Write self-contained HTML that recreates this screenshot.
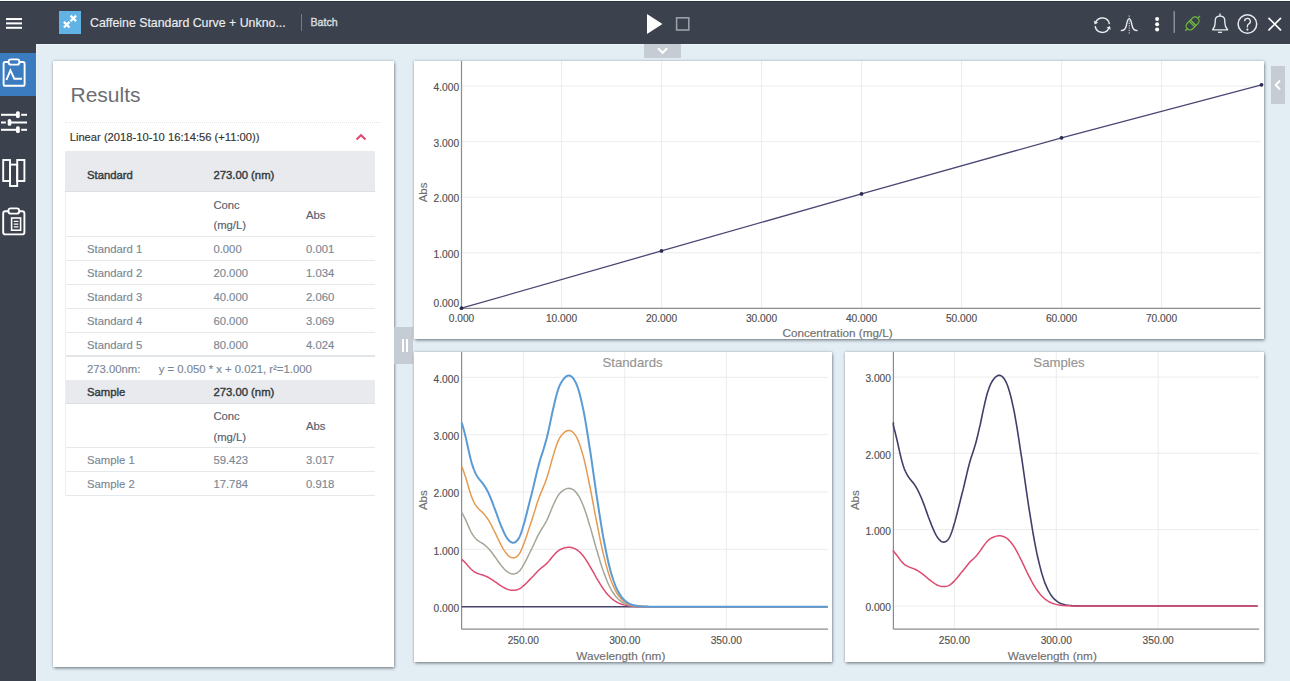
<!DOCTYPE html>
<html><head><meta charset="utf-8">
<style>
*{margin:0;padding:0;box-sizing:border-box}
html,body{width:1290px;height:681px;overflow:hidden;background:#e2edf4;font-family:"Liberation Sans",sans-serif}
.abs{position:absolute}
.card{position:absolute;background:#fff;box-shadow:0 0 2.5px rgba(40,45,50,.35),0.5px 1.5px 3px rgba(40,45,50,.45)}
.t{position:absolute;white-space:nowrap;line-height:1;-webkit-text-stroke:0.15px currentColor}
svg{position:absolute;overflow:visible}
</style></head><body>

<div class="abs" style="left:0;top:0;width:1290px;height:44px;background:#3b414d"></div>
<div class="abs" style="left:0;top:0;width:1290px;height:1px;background:#fff"></div>
<div class="abs" style="left:0;top:1px;width:1290px;height:1px;background:#2b3442"></div>
<div class="abs" style="left:0;top:44px;width:36px;height:637px;background:#3b414d"></div>
<div class="abs" style="left:36px;top:44px;width:1254px;height:637px;background:#e2edf4;border-top:1px solid #ecf2f7;border-left:1px solid #ecf2f7"></div>
<div class="abs" style="left:0;top:53px;width:36px;height:43px;background:#3b7cc0"></div>
<svg style="left:0;top:0" width="40" height="44"><g fill="#fff"><rect x="6" y="18.05" width="16" height="2"/><rect x="6" y="22.4" width="16" height="2"/><rect x="6" y="26.8" width="16" height="2"/></g></svg>
<div class="abs" style="left:59px;top:11px;width:22px;height:23px;background:#60b3e4"></div>
<svg style="left:59px;top:11px" width="22" height="23"><g stroke="#fff" stroke-width="2.2" stroke-linecap="butt"><path d="M4.9 10.9l5.6 5.6M10.5 10.9l-5.6 5.6M11.5 4.6l5.6 5.6M17.1 4.6l-5.6 5.6"/></g></svg>

<div class="abs" style="left:301px;top:14px;width:1px;height:17px;background:#737a83"></div>

<svg style="left:640px;top:8px" width="60" height="32"><path d="M7 6L22.5 16L7 26Z" fill="#fff"/><rect x="36.6" y="9.8" width="12.2" height="12.2" fill="none" stroke="#9aa0a8" stroke-width="1.6"/></svg>
<div class="abs" style="left:644px;top:44px;width:37px;height:14px;background:#c6ccd3"></div>
<svg style="left:644px;top:44px" width="37" height="14"><path d="M14 4.3l4.6 4.5 4.6-4.5" fill="none" stroke="#fff" stroke-width="1.9"/></svg>
<svg style="left:1085px;top:5px" width="205" height="36">
<g fill="none" stroke="#e8eaec" stroke-width="1.5">
<path d="M10.77 17.16A7.2 7.2 0 0 1 24.43 19.20"/>
<path d="M23.83 23.24A7.2 7.2 0 0 1 10.17 21.20"/>
</g>
<path d="M9.68 19.51L8.81 15.69L13.16 17.72Z" fill="#e8eaec"/>
<path d="M24.92 20.89L25.79 24.71L21.44 22.68Z" fill="#e8eaec"/>
<path d="M35.8 25.6C39.6 25.6 40.6 24 41.6 19.5C42.4 15.2 42.8 13.6 44.2 13.6C45.6 13.6 46 15.2 46.8 19.5C47.8 24 48.8 25.6 52.6 25.6" fill="none" stroke="#e8eaec" stroke-width="1.4"/>
<path d="M44.2 10.5v18.5" stroke="#e8eaec" stroke-width="1" stroke-dasharray="1.2 1.2"/>
<circle cx="72.1" cy="14" r="2" fill="#fff"/><circle cx="72.1" cy="19.2" r="2" fill="#fff"/><circle cx="72.1" cy="24.4" r="2" fill="#fff"/>
<rect x="88.5" y="6.2" width="1.5" height="21.7" fill="#8a9098"/>
<g transform="translate(107.6 18.4) rotate(-45)" fill="none" stroke="#6fb840" stroke-width="1.25">
<rect x="-7.5" y="-3.9" width="15" height="7.8" rx="3.9"/><path d="M-0.9 -3.9v7.8M0.9 -3.9v7.8M-10.5 0h3M7.5 0h3"/>
</g>
<path d="M127.6 24.8H142.6C140.6 22.5 139.8 20.5 139.8 17.5V15.8C139.8 12.9 137.8 11.1 135 11.1C132.2 11.1 130.2 12.9 130.2 15.8V17.5C130.2 20.5 129.4 22.5 127.6 24.8Z" fill="none" stroke="#e8eaec" stroke-width="1.35" stroke-linejoin="round"/>
<path d="M135 8.6v2.4" stroke="#e8eaec" stroke-width="1.4"/><path d="M133 27.3h4" stroke="#e8eaec" stroke-width="1.3"/>
<circle cx="162.4" cy="19" r="9.3" fill="none" stroke="#e8eaec" stroke-width="1.5"/>
<path d="M159.6 16.3a2.9 2.9 0 1 1 4.2 2.6c-1 .5-1.4 1.1-1.4 2.4v1.2" fill="none" stroke="#e8eaec" stroke-width="1.3"/>
<circle cx="162.4" cy="24.6" r="1.1" fill="#e8eaec"/>
<path d="M184 13.4l11.5 11.5M195.5 13.4l-11.5 11.5" stroke="#fff" stroke-width="1.7" stroke-linecap="round"/>
</svg>
<svg style="left:0;top:44px" width="36" height="200">
<g fill="none" stroke="#fff" stroke-width="1.9">
<rect x="3.6" y="18" width="21" height="23.8" rx="1.6"/>
<rect x="8.6" y="15.4" width="10.8" height="5.2" rx="2.4" fill="#3b7cc0"/>
<path d="M6.4 36L10.4 26.4L14.3 34.7H21.9"/>
</g>
<g fill="#fff">
<rect x="1" y="69.8" width="15" height="2"/><rect x="21.2" y="69.8" width="5.8" height="2"/><rect x="16" y="67.3" width="3.8" height="6.8" rx="1.6"/>
<rect x="1" y="77.5" width="4.9" height="2"/><rect x="10" y="77.5" width="17" height="2"/><rect x="7.7" y="75" width="3.6" height="6.8" rx="1.6"/>
<rect x="1" y="84.8" width="15" height="2"/><rect x="21.2" y="84.8" width="5.8" height="2"/><rect x="16" y="82.3" width="3.8" height="6.8" rx="1.6"/>
</g>
<g fill="none" stroke="#fff" stroke-width="1.9">
<rect x="3.2" y="116" width="6.8" height="21"/>
<rect x="10" y="120.6" width="7.2" height="21.4"/>
<rect x="17.2" y="116" width="7.2" height="21"/>
<rect x="3.2" y="167.2" width="21.2" height="23.2" rx="2.2"/>
<rect x="8.4" y="164.4" width="10.8" height="5.2" rx="2.4" fill="#3a414c"/>
<rect x="11.6" y="174" width="9" height="12.2" stroke-width="1.6"/>
<path d="M13.8 177.4h4.6M13.8 180.1h4.6M13.8 182.8h4.6" stroke-width="1.3"/>
</g>
</svg>
<div class="card" style="left:53px;top:61px;width:341px;height:606px"></div>

<div class="abs" style="left:65px;top:122px;width:316px;height:0;border-top:1px dotted #e3e6ea"></div>

<svg style="left:355px;top:132px" width="12" height="10"><path d="M1.5 7.5l4.5-4.3 4.5 4.3" fill="none" stroke="#e0466e" stroke-width="2"/></svg>
<div class="abs" style="left:65px;top:151px;width:310px;height:41px;background:#e8eaed"></div>
<div class="abs" style="left:65px;top:191px;width:310px;height:1px;background:#dcdfe3"></div>





<div class="abs" style="left:65px;top:236px;width:310px;height:1px;background:#e6e9ec"></div>















<div class="abs" style="left:65px;top:260px;width:310px;height:1px;background:#e6e9ec"></div>
<div class="abs" style="left:65px;top:284px;width:310px;height:1px;background:#e6e9ec"></div>
<div class="abs" style="left:65px;top:308px;width:310px;height:1px;background:#e6e9ec"></div>
<div class="abs" style="left:65px;top:332px;width:310px;height:1px;background:#e6e9ec"></div>
<div class="abs" style="left:65px;top:355px;width:310px;height:2px;background:#e3e6e9"></div>


<div class="abs" style="left:65px;top:380px;width:310px;height:24px;background:#e8eaed"></div>
<div class="abs" style="left:65px;top:403px;width:310px;height:1px;background:#dcdfe3"></div>





<div class="abs" style="left:65px;top:447px;width:310px;height:1px;background:#e6e9ec"></div>






<div class="abs" style="left:65px;top:471px;width:310px;height:1px;background:#e6e9ec"></div>
<div class="abs" style="left:65px;top:495px;width:310px;height:1px;background:#e6e9ec"></div>
<div class="abs" style="left:65px;top:192px;width:1px;height:304px;background:#eceef0"></div>
<div class="abs" style="left:394px;top:327px;width:19px;height:37px;background:#c6ccd3"></div>
<div class="abs" style="left:402px;top:339px;width:2.2px;height:13px;background:#fff"></div>
<div class="abs" style="left:405.6px;top:339px;width:2.2px;height:13px;background:#fff"></div>
<div class="abs" style="left:1271px;top:66px;width:14px;height:38px;background:#c6ccd3"></div>
<svg style="left:1271px;top:66px" width="14" height="38"><path d="M9 14.5l-4.3 4.5 4.3 4.5" fill="none" stroke="#fff" stroke-width="1.9"/></svg>
<div class="card" style="left:414px;top:61px;width:850px;height:278px"></div>
<svg style="left:0;top:0" width="1290" height="681"><path d="M561.5 61V308" stroke="#ececec" stroke-width="1"/><path d="M661.5 61V308" stroke="#ececec" stroke-width="1"/><path d="M761.5 61V308" stroke="#ececec" stroke-width="1"/><path d="M861.5 61V308" stroke="#ececec" stroke-width="1"/><path d="M961.5 61V308" stroke="#ececec" stroke-width="1"/><path d="M1061.5 61V308" stroke="#ececec" stroke-width="1"/><path d="M1161.5 61V308" stroke="#ececec" stroke-width="1"/><path d="M462 252.8H1261" stroke="#ececec" stroke-width="1"/><path d="M462 197.2H1261" stroke="#ececec" stroke-width="1"/><path d="M462 141.7H1261" stroke="#ececec" stroke-width="1"/><path d="M462 86.1H1261" stroke="#ececec" stroke-width="1"/><path d="M461.5 61V308.3M461.5 308.3H1260.5" stroke="#8c8c8c" stroke-width="1.2" fill="none"/><path d="M461.5 308.2 L661.5 250.9 L861.5 193.9 L1061.5 137.8 L1261.5 84.8" stroke="#4a4874" stroke-width="1.3" fill="none"/><circle cx="461.5" cy="308.2" r="1.9" fill="#2a2950"/><circle cx="661.5" cy="250.9" r="1.9" fill="#2a2950"/><circle cx="861.5" cy="193.9" r="1.9" fill="#2a2950"/><circle cx="1061.5" cy="137.8" r="1.9" fill="#2a2950"/><circle cx="1261.5" cy="84.8" r="1.9" fill="#2a2950"/></svg>














<div class="card" style="left:414px;top:352px;width:418px;height:310px"></div>
<svg style="left:0;top:0" width="1290" height="681"><path d="M523.3 352V629" stroke="#ececec" stroke-width="1"/><path d="M624.8 352V629" stroke="#ececec" stroke-width="1"/><path d="M726.3 352V629" stroke="#ececec" stroke-width="1"/><path d="M461.6 549.4H828" stroke="#ececec" stroke-width="1"/><path d="M461.6 492.0H828" stroke="#ececec" stroke-width="1"/><path d="M461.6 434.7H828" stroke="#ececec" stroke-width="1"/><path d="M461.6 377.3H828" stroke="#ececec" stroke-width="1"/><path d="M461.6 606.7H828" stroke="#ececec" stroke-width="1"/><path d="M461.6 352V629.2M461.6 629.2H828" stroke="#8c8c8c" stroke-width="1.2" fill="none"/><path d="M461.6 606.70 L462.6 606.70 L463.6 606.70 L464.6 606.70 L465.7 606.70 L466.7 606.70 L467.7 606.70 L468.7 606.70 L469.7 606.70 L470.7 606.70 L471.7 606.70 L472.8 606.70 L473.8 606.70 L474.8 606.70 L475.8 606.70 L476.8 606.70 L477.8 606.70 L478.8 606.70 L479.8 606.70 L480.9 606.70 L481.9 606.70 L482.9 606.70 L483.9 606.70 L484.9 606.70 L485.9 606.70 L486.9 606.70 L488.0 606.70 L489.0 606.70 L490.0 606.70 L491.0 606.70 L492.0 606.70 L493.0 606.70 L494.0 606.70 L495.1 606.70 L496.1 606.70 L497.1 606.70 L498.1 606.70 L499.1 606.70 L500.1 606.70 L501.1 606.70 L502.2 606.70 L503.2 606.70 L504.2 606.70 L505.2 606.70 L506.2 606.70 L507.2 606.70 L508.2 606.70 L509.3 606.70 L510.3 606.70 L511.3 606.70 L512.3 606.70 L513.3 606.70 L514.3 606.70 L515.3 606.70 L516.3 606.70 L517.4 606.70 L518.4 606.70 L519.4 606.70 L520.4 606.70 L521.4 606.70 L522.4 606.70 L523.4 606.70 L524.5 606.70 L525.5 606.70 L526.5 606.70 L527.5 606.70 L528.5 606.70 L529.5 606.70 L530.5 606.70 L531.6 606.70 L532.6 606.70 L533.6 606.70 L534.6 606.70 L535.6 606.70 L536.6 606.70 L537.6 606.70 L538.7 606.70 L539.7 606.70 L540.7 606.70 L541.7 606.70 L542.7 606.70 L543.7 606.70 L544.7 606.70 L545.7 606.70 L546.8 606.70 L547.8 606.70 L548.8 606.70 L549.8 606.70 L550.8 606.70 L551.8 606.70 L552.8 606.70 L553.9 606.70 L554.9 606.70 L555.9 606.70 L556.9 606.70 L557.9 606.70 L558.9 606.70 L559.9 606.70 L561.0 606.70 L562.0 606.70 L563.0 606.70 L564.0 606.70 L565.0 606.70 L566.0 606.70 L567.0 606.70 L568.1 606.70 L569.1 606.70 L570.1 606.70 L571.1 606.70 L572.1 606.70 L573.1 606.70 L574.1 606.70 L575.1 606.70 L576.2 606.70 L577.2 606.70 L578.2 606.70 L579.2 606.70 L580.2 606.70 L581.2 606.70 L582.2 606.70 L583.3 606.70 L584.3 606.70 L585.3 606.70 L586.3 606.70 L587.3 606.70 L588.3 606.70 L589.3 606.70 L590.4 606.70 L591.4 606.70 L592.4 606.70 L593.4 606.70 L594.4 606.70 L595.4 606.70 L596.4 606.70 L597.5 606.70 L598.5 606.70 L599.5 606.70 L600.5 606.70 L601.5 606.70 L602.5 606.70 L603.5 606.70 L604.6 606.70 L605.6 606.70 L606.6 606.70 L607.6 606.70 L608.6 606.70 L609.6 606.70 L610.6 606.70 L611.6 606.70 L612.7 606.70 L613.7 606.70 L614.7 606.70 L615.7 606.70 L616.7 606.70 L617.7 606.70 L618.7 606.70 L619.8 606.70 L620.8 606.70 L621.8 606.70 L622.8 606.70 L623.8 606.70 L624.8 606.70 L625.8 606.70 L626.9 606.70 L627.9 606.70 L628.9 606.70 L629.9 606.70 L630.9 606.70 L631.9 606.70 L632.9 606.70 L634.0 606.70 L635.0 606.70 L636.0 606.70 L637.0 606.70 L638.0 606.70 L639.0 606.70 L640.0 606.70 L641.0 606.70 L642.1 606.70 L643.1 606.70 L644.1 606.70 L645.1 606.70 L646.1 606.70 L647.1 606.70 L648.1 606.70 L649.2 606.70 L650.2 606.70 L651.2 606.70 L652.2 606.70 L653.2 606.70 L654.2 606.70 L655.2 606.70 L656.3 606.70 L657.3 606.70 L658.3 606.70 L659.3 606.70 L660.3 606.70 L661.3 606.70 L662.3 606.70 L663.4 606.70 L664.4 606.70 L665.4 606.70 L666.4 606.70 L667.4 606.70 L668.4 606.70 L669.4 606.70 L670.5 606.70 L671.5 606.70 L672.5 606.70 L673.5 606.70 L674.5 606.70 L675.5 606.70 L676.5 606.70 L677.5 606.70 L678.6 606.70 L679.6 606.70 L680.6 606.70 L681.6 606.70 L682.6 606.70 L683.6 606.70 L684.6 606.70 L685.7 606.70 L686.7 606.70 L687.7 606.70 L688.7 606.70 L689.7 606.70 L690.7 606.70 L691.7 606.70 L692.8 606.70 L693.8 606.70 L694.8 606.70 L695.8 606.70 L696.8 606.70 L697.8 606.70 L698.8 606.70 L699.9 606.70 L700.9 606.70 L701.9 606.70 L702.9 606.70 L703.9 606.70 L704.9 606.70 L705.9 606.70 L706.9 606.70 L708.0 606.70 L709.0 606.70 L710.0 606.70 L711.0 606.70 L712.0 606.70 L713.0 606.70 L714.0 606.70 L715.1 606.70 L716.1 606.70 L717.1 606.70 L718.1 606.70 L719.1 606.70 L720.1 606.70 L721.1 606.70 L722.2 606.70 L723.2 606.70 L724.2 606.70 L725.2 606.70 L726.2 606.70 L727.2 606.70 L728.2 606.70 L729.3 606.70 L730.3 606.70 L731.3 606.70 L732.3 606.70 L733.3 606.70 L734.3 606.70 L735.3 606.70 L736.3 606.70 L737.4 606.70 L738.4 606.70 L739.4 606.70 L740.4 606.70 L741.4 606.70 L742.4 606.70 L743.4 606.70 L744.5 606.70 L745.5 606.70 L746.5 606.70 L747.5 606.70 L748.5 606.70 L749.5 606.70 L750.5 606.70 L751.6 606.70 L752.6 606.70 L753.6 606.70 L754.6 606.70 L755.6 606.70 L756.6 606.70 L757.6 606.70 L758.7 606.70 L759.7 606.70 L760.7 606.70 L761.7 606.70 L762.7 606.70 L763.7 606.70 L764.7 606.70 L765.8 606.70 L766.8 606.70 L767.8 606.70 L768.8 606.70 L769.8 606.70 L770.8 606.70 L771.8 606.70 L772.8 606.70 L773.9 606.70 L774.9 606.70 L775.9 606.70 L776.9 606.70 L777.9 606.70 L778.9 606.70 L779.9 606.70 L781.0 606.70 L782.0 606.70 L783.0 606.70 L784.0 606.70 L785.0 606.70 L786.0 606.70 L787.0 606.70 L788.1 606.70 L789.1 606.70 L790.1 606.70 L791.1 606.70 L792.1 606.70 L793.1 606.70 L794.1 606.70 L795.2 606.70 L796.2 606.70 L797.2 606.70 L798.2 606.70 L799.2 606.70 L800.2 606.70 L801.2 606.70 L802.2 606.70 L803.3 606.70 L804.3 606.70 L805.3 606.70 L806.3 606.70 L807.3 606.70 L808.3 606.70 L809.3 606.70 L810.4 606.70 L811.4 606.70 L812.4 606.70 L813.4 606.70 L814.4 606.70 L815.4 606.70 L816.4 606.70 L817.5 606.70 L818.5 606.70 L819.5 606.70 L820.5 606.70 L821.5 606.70 L822.5 606.70 L823.5 606.70 L824.6 606.70 L825.6 606.70 L826.6 606.70 L827.6 606.70" stroke="#47456f" stroke-width="1.5" fill="none" stroke-linejoin="round"/><path d="M461.6 559.38 L462.6 560.18 L463.6 561.07 L464.6 562.05 L465.7 563.13 L466.7 564.28 L467.7 565.46 L468.7 566.63 L469.7 567.76 L470.7 568.82 L471.7 569.78 L472.8 570.64 L473.8 571.38 L474.8 572.02 L475.8 572.57 L476.8 573.03 L477.8 573.43 L478.8 573.79 L479.8 574.11 L480.9 574.43 L481.9 574.75 L482.9 575.08 L483.9 575.44 L484.9 575.83 L485.9 576.26 L486.9 576.73 L488.0 577.24 L489.0 577.80 L490.0 578.38 L491.0 579.01 L492.0 579.66 L493.0 580.34 L494.0 581.04 L495.1 581.75 L496.1 582.47 L497.1 583.19 L498.1 583.91 L499.1 584.61 L500.1 585.30 L501.1 585.96 L502.2 586.59 L503.2 587.19 L504.2 587.74 L505.2 588.26 L506.2 588.72 L507.2 589.12 L508.2 589.47 L509.3 589.76 L510.3 589.99 L511.3 590.15 L512.3 590.24 L513.3 590.27 L514.3 590.22 L515.3 590.11 L516.3 589.92 L517.4 589.65 L518.4 589.28 L519.4 588.82 L520.4 588.24 L521.4 587.54 L522.4 586.74 L523.4 585.86 L524.5 584.92 L525.5 583.94 L526.5 582.93 L527.5 581.92 L528.5 580.90 L529.5 579.87 L530.5 578.84 L531.6 577.80 L532.6 576.75 L533.6 575.68 L534.6 574.59 L535.6 573.48 L536.6 572.38 L537.6 571.31 L538.7 570.30 L539.7 569.36 L540.7 568.50 L541.7 567.70 L542.7 566.91 L543.7 566.11 L544.7 565.26 L545.7 564.34 L546.8 563.34 L547.8 562.27 L548.8 561.12 L549.8 559.91 L550.8 558.68 L551.8 557.44 L552.8 556.22 L553.9 555.04 L554.9 553.92 L555.9 552.88 L556.9 551.93 L557.9 551.08 L558.9 550.35 L559.9 549.73 L561.0 549.21 L562.0 548.77 L563.0 548.40 L564.0 548.07 L565.0 547.80 L566.0 547.58 L567.0 547.41 L568.1 547.32 L569.1 547.30 L570.1 547.36 L571.1 547.49 L572.1 547.70 L573.1 547.98 L574.1 548.35 L575.1 548.80 L576.2 549.35 L577.2 550.00 L578.2 550.75 L579.2 551.60 L580.2 552.56 L581.2 553.62 L582.2 554.78 L583.3 556.04 L584.3 557.39 L585.3 558.83 L586.3 560.35 L587.3 561.93 L588.3 563.58 L589.3 565.28 L590.4 567.02 L591.4 568.79 L592.4 570.58 L593.4 572.39 L594.4 574.19 L595.4 575.99 L596.4 577.78 L597.5 579.54 L598.5 581.27 L599.5 582.96 L600.5 584.60 L601.5 586.19 L602.5 587.72 L603.5 589.19 L604.6 590.60 L605.6 591.94 L606.6 593.20 L607.6 594.40 L608.6 595.52 L609.6 596.58 L610.6 597.56 L611.6 598.47 L612.7 599.32 L613.7 600.09 L614.7 600.81 L615.7 601.46 L616.7 602.06 L617.7 602.60 L618.7 603.09 L619.8 603.53 L620.8 603.92 L621.8 604.28 L622.8 604.59 L623.8 604.87 L624.8 605.12 L625.8 605.34 L626.9 605.53 L627.9 605.70 L628.9 605.85 L629.9 605.97 L630.9 606.08 L631.9 606.18 L632.9 606.26 L634.0 606.33 L635.0 606.39 L636.0 606.44 L637.0 606.49 L638.0 606.52 L639.0 606.55 L640.0 606.58 L641.0 606.60 L642.1 606.62 L643.1 606.63 L644.1 606.65 L645.1 606.66 L646.1 606.66 L647.1 606.67 L648.1 606.68 L649.2 606.68 L650.2 606.69 L651.2 606.69 L652.2 606.69 L653.2 606.69 L654.2 606.69 L655.2 606.70 L656.3 606.70 L657.3 606.70 L658.3 606.70 L659.3 606.70 L660.3 606.70 L661.3 606.70 L662.3 606.70 L663.4 606.70 L664.4 606.70 L665.4 606.70 L666.4 606.70 L667.4 606.70 L668.4 606.70 L669.4 606.70 L670.5 606.70 L671.5 606.70 L672.5 606.70 L673.5 606.70 L674.5 606.70 L675.5 606.70 L676.5 606.70 L677.5 606.70 L678.6 606.70 L679.6 606.70 L680.6 606.70 L681.6 606.70 L682.6 606.70 L683.6 606.70 L684.6 606.70 L685.7 606.70 L686.7 606.70 L687.7 606.70 L688.7 606.70 L689.7 606.70 L690.7 606.70 L691.7 606.70 L692.8 606.70 L693.8 606.70 L694.8 606.70 L695.8 606.70 L696.8 606.70 L697.8 606.70 L698.8 606.70 L699.9 606.70 L700.9 606.70 L701.9 606.70 L702.9 606.70 L703.9 606.70 L704.9 606.70 L705.9 606.70 L706.9 606.70 L708.0 606.70 L709.0 606.70 L710.0 606.70 L711.0 606.70 L712.0 606.70 L713.0 606.70 L714.0 606.70 L715.1 606.70 L716.1 606.70 L717.1 606.70 L718.1 606.70 L719.1 606.70 L720.1 606.70 L721.1 606.70 L722.2 606.70 L723.2 606.70 L724.2 606.70 L725.2 606.70 L726.2 606.70 L727.2 606.70 L728.2 606.70 L729.3 606.70 L730.3 606.70 L731.3 606.70 L732.3 606.70 L733.3 606.70 L734.3 606.70 L735.3 606.70 L736.3 606.70 L737.4 606.70 L738.4 606.70 L739.4 606.70 L740.4 606.70 L741.4 606.70 L742.4 606.70 L743.4 606.70 L744.5 606.70 L745.5 606.70 L746.5 606.70 L747.5 606.70 L748.5 606.70 L749.5 606.70 L750.5 606.70 L751.6 606.70 L752.6 606.70 L753.6 606.70 L754.6 606.70 L755.6 606.70 L756.6 606.70 L757.6 606.70 L758.7 606.70 L759.7 606.70 L760.7 606.70 L761.7 606.70 L762.7 606.70 L763.7 606.70 L764.7 606.70 L765.8 606.70 L766.8 606.70 L767.8 606.70 L768.8 606.70 L769.8 606.70 L770.8 606.70 L771.8 606.70 L772.8 606.70 L773.9 606.70 L774.9 606.70 L775.9 606.70 L776.9 606.70 L777.9 606.70 L778.9 606.70 L779.9 606.70 L781.0 606.70 L782.0 606.70 L783.0 606.70 L784.0 606.70 L785.0 606.70 L786.0 606.70 L787.0 606.70 L788.1 606.70 L789.1 606.70 L790.1 606.70 L791.1 606.70 L792.1 606.70 L793.1 606.70 L794.1 606.70 L795.2 606.70 L796.2 606.70 L797.2 606.70 L798.2 606.70 L799.2 606.70 L800.2 606.70 L801.2 606.70 L802.2 606.70 L803.3 606.70 L804.3 606.70 L805.3 606.70 L806.3 606.70 L807.3 606.70 L808.3 606.70 L809.3 606.70 L810.4 606.70 L811.4 606.70 L812.4 606.70 L813.4 606.70 L814.4 606.70 L815.4 606.70 L816.4 606.70 L817.5 606.70 L818.5 606.70 L819.5 606.70 L820.5 606.70 L821.5 606.70 L822.5 606.70 L823.5 606.70 L824.6 606.70 L825.6 606.70 L826.6 606.70 L827.6 606.70" stroke="#de4a6f" stroke-width="1.5" fill="none" stroke-linejoin="round"/><path d="M461.6 512.43 L462.6 514.02 L463.6 515.79 L464.6 517.75 L465.7 519.90 L466.7 522.18 L467.7 524.53 L468.7 526.87 L469.7 529.12 L470.7 531.23 L471.7 533.15 L472.8 534.85 L473.8 536.34 L474.8 537.61 L475.8 538.70 L476.8 539.62 L477.8 540.42 L478.8 541.13 L479.8 541.78 L480.9 542.41 L481.9 543.05 L482.9 543.71 L483.9 544.43 L484.9 545.21 L485.9 546.06 L486.9 547.00 L488.0 548.02 L489.0 549.11 L490.0 550.29 L491.0 551.53 L492.0 552.83 L493.0 554.18 L494.0 555.58 L495.1 556.99 L496.1 558.43 L497.1 559.86 L498.1 561.29 L499.1 562.69 L500.1 564.06 L501.1 565.38 L502.2 566.64 L503.2 567.83 L504.2 568.94 L505.2 569.95 L506.2 570.87 L507.2 571.68 L508.2 572.38 L509.3 572.96 L510.3 573.41 L511.3 573.73 L512.3 573.91 L513.3 573.96 L514.3 573.87 L515.3 573.64 L516.3 573.26 L517.4 572.73 L518.4 572.00 L519.4 571.07 L520.4 569.91 L521.4 568.53 L522.4 566.94 L523.4 565.18 L524.5 563.30 L525.5 561.35 L526.5 559.35 L527.5 557.33 L528.5 555.29 L529.5 553.25 L530.5 551.19 L531.6 549.12 L532.6 547.03 L533.6 544.89 L534.6 542.72 L535.6 540.52 L536.6 538.32 L537.6 536.19 L538.7 534.17 L539.7 532.31 L540.7 530.60 L541.7 529.00 L542.7 527.43 L543.7 525.83 L544.7 524.13 L545.7 522.30 L546.8 520.32 L547.8 518.17 L548.8 515.89 L549.8 513.49 L550.8 511.03 L551.8 508.56 L552.8 506.13 L553.9 503.79 L554.9 501.56 L555.9 499.48 L556.9 497.58 L557.9 495.89 L558.9 494.43 L559.9 493.20 L561.0 492.16 L562.0 491.29 L563.0 490.54 L564.0 489.90 L565.0 489.35 L566.0 488.91 L567.0 488.59 L568.1 488.40 L569.1 488.36 L570.1 488.48 L571.1 488.74 L572.1 489.15 L573.1 489.72 L574.1 490.45 L575.1 491.36 L576.2 492.45 L577.2 493.74 L578.2 495.23 L579.2 496.92 L580.2 498.83 L581.2 500.95 L582.2 503.26 L583.3 505.78 L584.3 508.47 L585.3 511.33 L586.3 514.35 L587.3 517.51 L588.3 520.79 L589.3 524.17 L590.4 527.64 L591.4 531.17 L592.4 534.74 L593.4 538.34 L594.4 541.94 L595.4 545.53 L596.4 549.08 L597.5 552.59 L598.5 556.03 L599.5 559.40 L600.5 562.67 L601.5 565.84 L602.5 568.89 L603.5 571.82 L604.6 574.62 L605.6 577.29 L606.6 579.81 L607.6 582.19 L608.6 584.43 L609.6 586.53 L610.6 588.49 L611.6 590.31 L612.7 591.99 L613.7 593.54 L614.7 594.96 L615.7 596.26 L616.7 597.45 L617.7 598.53 L618.7 599.50 L619.8 600.38 L620.8 601.17 L621.8 601.87 L622.8 602.50 L623.8 603.06 L624.8 603.55 L625.8 603.99 L626.9 604.37 L627.9 604.71 L628.9 605.00 L629.9 605.25 L630.9 605.47 L631.9 605.66 L632.9 605.82 L634.0 605.96 L635.0 606.08 L636.0 606.19 L637.0 606.27 L638.0 606.34 L639.0 606.41 L640.0 606.46 L641.0 606.50 L642.1 606.54 L643.1 606.57 L644.1 606.59 L645.1 606.61 L646.1 606.63 L647.1 606.64 L648.1 606.65 L649.2 606.66 L650.2 606.67 L651.2 606.68 L652.2 606.68 L653.2 606.69 L654.2 606.69 L655.2 606.69 L656.3 606.69 L657.3 606.69 L658.3 606.70 L659.3 606.70 L660.3 606.70 L661.3 606.70 L662.3 606.70 L663.4 606.70 L664.4 606.70 L665.4 606.70 L666.4 606.70 L667.4 606.70 L668.4 606.70 L669.4 606.70 L670.5 606.70 L671.5 606.70 L672.5 606.70 L673.5 606.70 L674.5 606.70 L675.5 606.70 L676.5 606.70 L677.5 606.70 L678.6 606.70 L679.6 606.70 L680.6 606.70 L681.6 606.70 L682.6 606.70 L683.6 606.70 L684.6 606.70 L685.7 606.70 L686.7 606.70 L687.7 606.70 L688.7 606.70 L689.7 606.70 L690.7 606.70 L691.7 606.70 L692.8 606.70 L693.8 606.70 L694.8 606.70 L695.8 606.70 L696.8 606.70 L697.8 606.70 L698.8 606.70 L699.9 606.70 L700.9 606.70 L701.9 606.70 L702.9 606.70 L703.9 606.70 L704.9 606.70 L705.9 606.70 L706.9 606.70 L708.0 606.70 L709.0 606.70 L710.0 606.70 L711.0 606.70 L712.0 606.70 L713.0 606.70 L714.0 606.70 L715.1 606.70 L716.1 606.70 L717.1 606.70 L718.1 606.70 L719.1 606.70 L720.1 606.70 L721.1 606.70 L722.2 606.70 L723.2 606.70 L724.2 606.70 L725.2 606.70 L726.2 606.70 L727.2 606.70 L728.2 606.70 L729.3 606.70 L730.3 606.70 L731.3 606.70 L732.3 606.70 L733.3 606.70 L734.3 606.70 L735.3 606.70 L736.3 606.70 L737.4 606.70 L738.4 606.70 L739.4 606.70 L740.4 606.70 L741.4 606.70 L742.4 606.70 L743.4 606.70 L744.5 606.70 L745.5 606.70 L746.5 606.70 L747.5 606.70 L748.5 606.70 L749.5 606.70 L750.5 606.70 L751.6 606.70 L752.6 606.70 L753.6 606.70 L754.6 606.70 L755.6 606.70 L756.6 606.70 L757.6 606.70 L758.7 606.70 L759.7 606.70 L760.7 606.70 L761.7 606.70 L762.7 606.70 L763.7 606.70 L764.7 606.70 L765.8 606.70 L766.8 606.70 L767.8 606.70 L768.8 606.70 L769.8 606.70 L770.8 606.70 L771.8 606.70 L772.8 606.70 L773.9 606.70 L774.9 606.70 L775.9 606.70 L776.9 606.70 L777.9 606.70 L778.9 606.70 L779.9 606.70 L781.0 606.70 L782.0 606.70 L783.0 606.70 L784.0 606.70 L785.0 606.70 L786.0 606.70 L787.0 606.70 L788.1 606.70 L789.1 606.70 L790.1 606.70 L791.1 606.70 L792.1 606.70 L793.1 606.70 L794.1 606.70 L795.2 606.70 L796.2 606.70 L797.2 606.70 L798.2 606.70 L799.2 606.70 L800.2 606.70 L801.2 606.70 L802.2 606.70 L803.3 606.70 L804.3 606.70 L805.3 606.70 L806.3 606.70 L807.3 606.70 L808.3 606.70 L809.3 606.70 L810.4 606.70 L811.4 606.70 L812.4 606.70 L813.4 606.70 L814.4 606.70 L815.4 606.70 L816.4 606.70 L817.5 606.70 L818.5 606.70 L819.5 606.70 L820.5 606.70 L821.5 606.70 L822.5 606.70 L823.5 606.70 L824.6 606.70 L825.6 606.70 L826.6 606.70 L827.6 606.70" stroke="#a4a697" stroke-width="1.5" fill="none" stroke-linejoin="round"/><path d="M461.6 466.26 L462.6 468.63 L463.6 471.26 L464.6 474.19 L465.7 477.38 L466.7 480.79 L467.7 484.29 L468.7 487.77 L469.7 491.13 L470.7 494.27 L471.7 497.12 L472.8 499.66 L473.8 501.87 L474.8 503.77 L475.8 505.39 L476.8 506.77 L477.8 507.96 L478.8 509.01 L479.8 509.98 L480.9 510.92 L481.9 511.87 L482.9 512.86 L483.9 513.93 L484.9 515.09 L485.9 516.36 L486.9 517.76 L488.0 519.27 L489.0 520.91 L490.0 522.66 L491.0 524.51 L492.0 526.45 L493.0 528.46 L494.0 530.54 L495.1 532.65 L496.1 534.78 L497.1 536.92 L498.1 539.05 L499.1 541.13 L500.1 543.17 L501.1 545.14 L502.2 547.01 L503.2 548.79 L504.2 550.44 L505.2 551.96 L506.2 553.32 L507.2 554.53 L508.2 555.57 L509.3 556.43 L510.3 557.10 L511.3 557.57 L512.3 557.85 L513.3 557.92 L514.3 557.79 L515.3 557.45 L516.3 556.89 L517.4 556.08 L518.4 555.01 L519.4 553.62 L520.4 551.90 L521.4 549.83 L522.4 547.46 L523.4 544.84 L524.5 542.05 L525.5 539.14 L526.5 536.16 L527.5 533.15 L528.5 530.11 L529.5 527.07 L530.5 524.01 L531.6 520.92 L532.6 517.80 L533.6 514.62 L534.6 511.38 L535.6 508.10 L536.6 504.83 L537.6 501.65 L538.7 498.65 L539.7 495.87 L540.7 493.32 L541.7 490.94 L542.7 488.60 L543.7 486.22 L544.7 483.69 L545.7 480.96 L546.8 478.01 L547.8 474.81 L548.8 471.41 L549.8 467.84 L550.8 464.17 L551.8 460.49 L552.8 456.88 L553.9 453.38 L554.9 450.06 L555.9 446.96 L556.9 444.13 L557.9 441.61 L558.9 439.44 L559.9 437.60 L561.0 436.06 L562.0 434.76 L563.0 433.65 L564.0 432.69 L565.0 431.87 L566.0 431.21 L567.0 430.73 L568.1 430.46 L569.1 430.40 L570.1 430.57 L571.1 430.96 L572.1 431.57 L573.1 432.42 L574.1 433.51 L575.1 434.86 L576.2 436.49 L577.2 438.41 L578.2 440.63 L579.2 443.16 L580.2 446.00 L581.2 449.15 L582.2 452.60 L583.3 456.34 L584.3 460.36 L585.3 464.62 L586.3 469.12 L587.3 473.82 L588.3 478.71 L589.3 483.75 L590.4 488.91 L591.4 494.17 L592.4 499.49 L593.4 504.85 L594.4 510.22 L595.4 515.56 L596.4 520.86 L597.5 526.09 L598.5 531.22 L599.5 536.23 L600.5 541.10 L601.5 545.82 L602.5 550.37 L603.5 554.74 L604.6 558.91 L605.6 562.88 L606.6 566.64 L607.6 570.19 L608.6 573.53 L609.6 576.65 L610.6 579.57 L611.6 582.28 L612.7 584.78 L613.7 587.09 L614.7 589.21 L615.7 591.15 L616.7 592.92 L617.7 594.52 L618.7 595.97 L619.8 597.28 L620.8 598.46 L621.8 599.51 L622.8 600.44 L623.8 601.27 L624.8 602.01 L625.8 602.66 L626.9 603.23 L627.9 603.73 L628.9 604.16 L629.9 604.54 L630.9 604.87 L631.9 605.15 L632.9 605.40 L634.0 605.60 L635.0 605.78 L636.0 605.93 L637.0 606.06 L638.0 606.17 L639.0 606.26 L640.0 606.34 L641.0 606.40 L642.1 606.46 L643.1 606.50 L644.1 606.54 L645.1 606.57 L646.1 606.59 L647.1 606.61 L648.1 606.63 L649.2 606.65 L650.2 606.66 L651.2 606.67 L652.2 606.67 L653.2 606.68 L654.2 606.68 L655.2 606.69 L656.3 606.69 L657.3 606.69 L658.3 606.69 L659.3 606.69 L660.3 606.70 L661.3 606.70 L662.3 606.70 L663.4 606.70 L664.4 606.70 L665.4 606.70 L666.4 606.70 L667.4 606.70 L668.4 606.70 L669.4 606.70 L670.5 606.70 L671.5 606.70 L672.5 606.70 L673.5 606.70 L674.5 606.70 L675.5 606.70 L676.5 606.70 L677.5 606.70 L678.6 606.70 L679.6 606.70 L680.6 606.70 L681.6 606.70 L682.6 606.70 L683.6 606.70 L684.6 606.70 L685.7 606.70 L686.7 606.70 L687.7 606.70 L688.7 606.70 L689.7 606.70 L690.7 606.70 L691.7 606.70 L692.8 606.70 L693.8 606.70 L694.8 606.70 L695.8 606.70 L696.8 606.70 L697.8 606.70 L698.8 606.70 L699.9 606.70 L700.9 606.70 L701.9 606.70 L702.9 606.70 L703.9 606.70 L704.9 606.70 L705.9 606.70 L706.9 606.70 L708.0 606.70 L709.0 606.70 L710.0 606.70 L711.0 606.70 L712.0 606.70 L713.0 606.70 L714.0 606.70 L715.1 606.70 L716.1 606.70 L717.1 606.70 L718.1 606.70 L719.1 606.70 L720.1 606.70 L721.1 606.70 L722.2 606.70 L723.2 606.70 L724.2 606.70 L725.2 606.70 L726.2 606.70 L727.2 606.70 L728.2 606.70 L729.3 606.70 L730.3 606.70 L731.3 606.70 L732.3 606.70 L733.3 606.70 L734.3 606.70 L735.3 606.70 L736.3 606.70 L737.4 606.70 L738.4 606.70 L739.4 606.70 L740.4 606.70 L741.4 606.70 L742.4 606.70 L743.4 606.70 L744.5 606.70 L745.5 606.70 L746.5 606.70 L747.5 606.70 L748.5 606.70 L749.5 606.70 L750.5 606.70 L751.6 606.70 L752.6 606.70 L753.6 606.70 L754.6 606.70 L755.6 606.70 L756.6 606.70 L757.6 606.70 L758.7 606.70 L759.7 606.70 L760.7 606.70 L761.7 606.70 L762.7 606.70 L763.7 606.70 L764.7 606.70 L765.8 606.70 L766.8 606.70 L767.8 606.70 L768.8 606.70 L769.8 606.70 L770.8 606.70 L771.8 606.70 L772.8 606.70 L773.9 606.70 L774.9 606.70 L775.9 606.70 L776.9 606.70 L777.9 606.70 L778.9 606.70 L779.9 606.70 L781.0 606.70 L782.0 606.70 L783.0 606.70 L784.0 606.70 L785.0 606.70 L786.0 606.70 L787.0 606.70 L788.1 606.70 L789.1 606.70 L790.1 606.70 L791.1 606.70 L792.1 606.70 L793.1 606.70 L794.1 606.70 L795.2 606.70 L796.2 606.70 L797.2 606.70 L798.2 606.70 L799.2 606.70 L800.2 606.70 L801.2 606.70 L802.2 606.70 L803.3 606.70 L804.3 606.70 L805.3 606.70 L806.3 606.70 L807.3 606.70 L808.3 606.70 L809.3 606.70 L810.4 606.70 L811.4 606.70 L812.4 606.70 L813.4 606.70 L814.4 606.70 L815.4 606.70 L816.4 606.70 L817.5 606.70 L818.5 606.70 L819.5 606.70 L820.5 606.70 L821.5 606.70 L822.5 606.70 L823.5 606.70 L824.6 606.70 L825.6 606.70 L826.6 606.70 L827.6 606.70" stroke="#e59a50" stroke-width="1.5" fill="none" stroke-linejoin="round"/><path d="M461.6 422.55 L462.6 425.67 L463.6 429.12 L464.6 432.95 L465.7 437.15 L466.7 441.61 L467.7 446.20 L468.7 450.76 L469.7 455.16 L470.7 459.28 L471.7 463.02 L472.8 466.35 L473.8 469.25 L474.8 471.74 L475.8 473.86 L476.8 475.67 L477.8 477.23 L478.8 478.61 L479.8 479.89 L480.9 481.12 L481.9 482.36 L482.9 483.66 L483.9 485.06 L484.9 486.58 L485.9 488.25 L486.9 490.08 L488.0 492.07 L489.0 494.21 L490.0 496.50 L491.0 498.93 L492.0 501.47 L493.0 504.12 L494.0 506.83 L495.1 509.61 L496.1 512.41 L497.1 515.21 L498.1 517.99 L499.1 520.73 L500.1 523.40 L501.1 525.98 L502.2 528.44 L503.2 530.76 L504.2 532.93 L505.2 534.92 L506.2 536.71 L507.2 538.30 L508.2 539.66 L509.3 540.79 L510.3 541.66 L511.3 542.29 L512.3 542.65 L513.3 542.75 L514.3 542.57 L515.3 542.12 L516.3 541.39 L517.4 540.33 L518.4 538.92 L519.4 537.11 L520.4 534.84 L521.4 532.13 L522.4 529.02 L523.4 525.59 L524.5 521.93 L525.5 518.12 L526.5 514.21 L527.5 510.26 L528.5 506.28 L529.5 502.29 L530.5 498.27 L531.6 494.23 L532.6 490.13 L533.6 485.97 L534.6 481.72 L535.6 477.42 L536.6 473.13 L537.6 468.96 L538.7 465.02 L539.7 461.39 L540.7 458.05 L541.7 454.91 L542.7 451.85 L543.7 448.72 L544.7 445.41 L545.7 441.84 L546.8 437.96 L547.8 433.77 L548.8 429.31 L549.8 424.62 L550.8 419.82 L551.8 415.00 L552.8 410.25 L553.9 405.67 L554.9 401.31 L555.9 397.25 L556.9 393.54 L557.9 390.24 L558.9 387.40 L559.9 384.98 L561.0 382.96 L562.0 381.26 L563.0 379.80 L564.0 378.54 L565.0 377.47 L566.0 376.60 L567.0 375.97 L568.1 375.61 L569.1 375.54 L570.1 375.76 L571.1 376.27 L572.1 377.08 L573.1 378.19 L574.1 379.62 L575.1 381.39 L576.2 383.52 L577.2 386.04 L578.2 388.95 L579.2 392.27 L580.2 395.99 L581.2 400.12 L582.2 404.65 L583.3 409.55 L584.3 414.82 L585.3 420.41 L586.3 426.31 L587.3 432.48 L588.3 438.88 L589.3 445.49 L590.4 452.26 L591.4 459.15 L592.4 466.13 L593.4 473.16 L594.4 480.19 L595.4 487.20 L596.4 494.15 L597.5 501.00 L598.5 507.73 L599.5 514.30 L600.5 520.69 L601.5 526.88 L602.5 532.84 L603.5 538.57 L604.6 544.04 L605.6 549.24 L606.6 554.17 L607.6 558.83 L608.6 563.21 L609.6 567.30 L610.6 571.13 L611.6 574.68 L612.7 577.96 L613.7 580.99 L614.7 583.77 L615.7 586.31 L616.7 588.63 L617.7 590.73 L618.7 592.64 L619.8 594.35 L620.8 595.89 L621.8 597.27 L622.8 598.50 L623.8 599.59 L624.8 600.55 L625.8 601.40 L626.9 602.15 L627.9 602.80 L628.9 603.37 L629.9 603.87 L630.9 604.30 L631.9 604.67 L632.9 604.99 L634.0 605.26 L635.0 605.50 L636.0 605.70 L637.0 605.86 L638.0 606.01 L639.0 606.13 L640.0 606.23 L641.0 606.31 L642.1 606.38 L643.1 606.44 L644.1 606.49 L645.1 606.53 L646.1 606.56 L647.1 606.59 L648.1 606.61 L649.2 606.63 L650.2 606.64 L651.2 606.65 L652.2 606.66 L653.2 606.67 L654.2 606.68 L655.2 606.68 L656.3 606.69 L657.3 606.69 L658.3 606.69 L659.3 606.69 L660.3 606.69 L661.3 606.70 L662.3 606.70 L663.4 606.70 L664.4 606.70 L665.4 606.70 L666.4 606.70 L667.4 606.70 L668.4 606.70 L669.4 606.70 L670.5 606.70 L671.5 606.70 L672.5 606.70 L673.5 606.70 L674.5 606.70 L675.5 606.70 L676.5 606.70 L677.5 606.70 L678.6 606.70 L679.6 606.70 L680.6 606.70 L681.6 606.70 L682.6 606.70 L683.6 606.70 L684.6 606.70 L685.7 606.70 L686.7 606.70 L687.7 606.70 L688.7 606.70 L689.7 606.70 L690.7 606.70 L691.7 606.70 L692.8 606.70 L693.8 606.70 L694.8 606.70 L695.8 606.70 L696.8 606.70 L697.8 606.70 L698.8 606.70 L699.9 606.70 L700.9 606.70 L701.9 606.70 L702.9 606.70 L703.9 606.70 L704.9 606.70 L705.9 606.70 L706.9 606.70 L708.0 606.70 L709.0 606.70 L710.0 606.70 L711.0 606.70 L712.0 606.70 L713.0 606.70 L714.0 606.70 L715.1 606.70 L716.1 606.70 L717.1 606.70 L718.1 606.70 L719.1 606.70 L720.1 606.70 L721.1 606.70 L722.2 606.70 L723.2 606.70 L724.2 606.70 L725.2 606.70 L726.2 606.70 L727.2 606.70 L728.2 606.70 L729.3 606.70 L730.3 606.70 L731.3 606.70 L732.3 606.70 L733.3 606.70 L734.3 606.70 L735.3 606.70 L736.3 606.70 L737.4 606.70 L738.4 606.70 L739.4 606.70 L740.4 606.70 L741.4 606.70 L742.4 606.70 L743.4 606.70 L744.5 606.70 L745.5 606.70 L746.5 606.70 L747.5 606.70 L748.5 606.70 L749.5 606.70 L750.5 606.70 L751.6 606.70 L752.6 606.70 L753.6 606.70 L754.6 606.70 L755.6 606.70 L756.6 606.70 L757.6 606.70 L758.7 606.70 L759.7 606.70 L760.7 606.70 L761.7 606.70 L762.7 606.70 L763.7 606.70 L764.7 606.70 L765.8 606.70 L766.8 606.70 L767.8 606.70 L768.8 606.70 L769.8 606.70 L770.8 606.70 L771.8 606.70 L772.8 606.70 L773.9 606.70 L774.9 606.70 L775.9 606.70 L776.9 606.70 L777.9 606.70 L778.9 606.70 L779.9 606.70 L781.0 606.70 L782.0 606.70 L783.0 606.70 L784.0 606.70 L785.0 606.70 L786.0 606.70 L787.0 606.70 L788.1 606.70 L789.1 606.70 L790.1 606.70 L791.1 606.70 L792.1 606.70 L793.1 606.70 L794.1 606.70 L795.2 606.70 L796.2 606.70 L797.2 606.70 L798.2 606.70 L799.2 606.70 L800.2 606.70 L801.2 606.70 L802.2 606.70 L803.3 606.70 L804.3 606.70 L805.3 606.70 L806.3 606.70 L807.3 606.70 L808.3 606.70 L809.3 606.70 L810.4 606.70 L811.4 606.70 L812.4 606.70 L813.4 606.70 L814.4 606.70 L815.4 606.70 L816.4 606.70 L817.5 606.70 L818.5 606.70 L819.5 606.70 L820.5 606.70 L821.5 606.70 L822.5 606.70 L823.5 606.70 L824.6 606.70 L825.6 606.70 L826.6 606.70 L827.6 606.70" stroke="#5b9bd5" stroke-width="2" fill="none" stroke-linejoin="round"/></svg>










<div class="card" style="left:845px;top:352px;width:419px;height:310px"></div>
<svg style="left:0;top:0" width="1290" height="681"><path d="M954.4 352V629" stroke="#ececec" stroke-width="1"/><path d="M1056.3 352V629" stroke="#ececec" stroke-width="1"/><path d="M1158.2 352V629" stroke="#ececec" stroke-width="1"/><path d="M893.4 529.6H1259.2" stroke="#ececec" stroke-width="1"/><path d="M893.4 453.3H1259.2" stroke="#ececec" stroke-width="1"/><path d="M893.4 377.0H1259.2" stroke="#ececec" stroke-width="1"/><path d="M893.4 606.0H1259.2" stroke="#ececec" stroke-width="1"/><path d="M893.4 352V629.2M893.4 629.2H1259.2" stroke="#8c8c8c" stroke-width="1.2" fill="none"/><path d="M893.4 422.20 L893.4 425.30 L894.2 428.75 L895.2 432.57 L896.2 436.76 L897.3 441.21 L898.3 445.79 L899.3 450.35 L900.3 454.75 L901.3 458.85 L902.3 462.59 L903.3 465.91 L904.3 468.81 L905.4 471.29 L906.4 473.41 L907.4 475.21 L908.4 476.77 L909.4 478.15 L910.4 479.42 L911.4 480.65 L912.4 481.89 L913.5 483.19 L914.5 484.58 L915.5 486.10 L916.5 487.77 L917.5 489.60 L918.5 491.58 L919.5 493.72 L920.5 496.01 L921.6 498.43 L922.6 500.97 L923.6 503.61 L924.6 506.32 L925.6 509.09 L926.6 511.88 L927.6 514.68 L928.6 517.46 L929.7 520.19 L930.7 522.86 L931.7 525.43 L932.7 527.89 L933.7 530.21 L934.7 532.37 L935.7 534.35 L936.7 536.14 L937.7 537.73 L938.8 539.09 L939.8 540.21 L940.8 541.08 L941.8 541.71 L942.8 542.07 L943.8 542.16 L944.8 541.99 L945.8 541.54 L946.9 540.81 L947.9 539.76 L948.9 538.35 L949.9 536.53 L950.9 534.27 L951.9 531.57 L952.9 528.47 L953.9 525.04 L955.0 521.39 L956.0 517.58 L957.0 513.68 L958.0 509.74 L959.0 505.77 L960.0 501.78 L961.0 497.78 L962.0 493.74 L963.1 489.65 L964.1 485.49 L965.1 481.25 L966.1 476.96 L967.1 472.68 L968.1 468.52 L969.1 464.59 L970.1 460.96 L971.1 457.62 L972.2 454.49 L973.2 451.44 L974.2 448.32 L975.2 445.01 L976.2 441.44 L977.2 437.57 L978.2 433.40 L979.2 428.94 L980.3 424.26 L981.3 419.47 L982.3 414.65 L983.3 409.92 L984.3 405.34 L985.3 400.99 L986.3 396.94 L987.3 393.23 L988.4 389.95 L989.4 387.10 L990.4 384.70 L991.4 382.68 L992.4 380.98 L993.4 379.52 L994.4 378.27 L995.4 377.20 L996.5 376.33 L997.5 375.70 L998.5 375.34 L999.5 375.27 L1000.5 375.49 L1001.5 376.00 L1002.5 376.80 L1003.5 377.91 L1004.6 379.34 L1005.6 381.11 L1006.6 383.24 L1007.6 385.75 L1008.6 388.65 L1009.6 391.96 L1010.6 395.68 L1011.6 399.81 L1012.6 404.32 L1013.7 409.22 L1014.7 414.47 L1015.7 420.06 L1016.7 425.94 L1017.7 432.10 L1018.7 438.49 L1019.7 445.09 L1020.7 451.85 L1021.8 458.73 L1022.8 465.69 L1023.8 472.71 L1024.8 479.73 L1025.8 486.72 L1026.8 493.66 L1027.8 500.50 L1028.8 507.21 L1029.9 513.77 L1030.9 520.15 L1031.9 526.33 L1032.9 532.28 L1033.9 537.99 L1034.9 543.45 L1035.9 548.65 L1036.9 553.57 L1038.0 558.22 L1039.0 562.59 L1040.0 566.68 L1041.0 570.49 L1042.0 574.04 L1043.0 577.31 L1044.0 580.34 L1045.0 583.11 L1046.1 585.65 L1047.1 587.96 L1048.1 590.06 L1049.1 591.96 L1050.1 593.67 L1051.1 595.21 L1052.1 596.59 L1053.1 597.81 L1054.1 598.90 L1055.2 599.86 L1056.2 600.71 L1057.2 601.46 L1058.2 602.11 L1059.2 602.68 L1060.2 603.18 L1061.2 603.60 L1062.2 603.97 L1063.3 604.29 L1064.3 604.57 L1065.3 604.80 L1066.3 605.00 L1067.3 605.17 L1068.3 605.31 L1069.3 605.43 L1070.3 605.53 L1071.4 605.61 L1072.4 605.68 L1073.4 605.74 L1074.4 605.79 L1075.4 605.83 L1076.4 605.86 L1077.4 605.89 L1078.4 605.91 L1079.5 605.93 L1080.5 605.94 L1081.5 605.95 L1082.5 605.96 L1083.5 605.97 L1084.5 605.98 L1085.5 605.98 L1086.5 605.99 L1087.5 605.99 L1088.6 605.99 L1089.6 605.99 L1090.6 605.99 L1091.6 606.00 L1092.6 606.00 L1093.6 606.00 L1094.6 606.00 L1095.6 606.00 L1096.7 606.00 L1097.7 606.00 L1098.7 606.00 L1099.7 606.00 L1100.7 606.00 L1101.7 606.00 L1102.7 606.00 L1103.7 606.00 L1104.8 606.00 L1105.8 606.00 L1106.8 606.00 L1107.8 606.00 L1108.8 606.00 L1109.8 606.00 L1110.8 606.00 L1111.8 606.00 L1112.9 606.00 L1113.9 606.00 L1114.9 606.00 L1115.9 606.00 L1116.9 606.00 L1117.9 606.00 L1118.9 606.00 L1119.9 606.00 L1121.0 606.00 L1122.0 606.00 L1123.0 606.00 L1124.0 606.00 L1125.0 606.00 L1126.0 606.00 L1127.0 606.00 L1128.0 606.00 L1129.0 606.00 L1130.1 606.00 L1131.1 606.00 L1132.1 606.00 L1133.1 606.00 L1134.1 606.00 L1135.1 606.00 L1136.1 606.00 L1137.1 606.00 L1138.2 606.00 L1139.2 606.00 L1140.2 606.00 L1141.2 606.00 L1142.2 606.00 L1143.2 606.00 L1144.2 606.00 L1145.2 606.00 L1146.3 606.00 L1147.3 606.00 L1148.3 606.00 L1149.3 606.00 L1150.3 606.00 L1151.3 606.00 L1152.3 606.00 L1153.3 606.00 L1154.4 606.00 L1155.4 606.00 L1156.4 606.00 L1157.4 606.00 L1158.4 606.00 L1159.4 606.00 L1160.4 606.00 L1161.4 606.00 L1162.5 606.00 L1163.5 606.00 L1164.5 606.00 L1165.5 606.00 L1166.5 606.00 L1167.5 606.00 L1168.5 606.00 L1169.5 606.00 L1170.5 606.00 L1171.6 606.00 L1172.6 606.00 L1173.6 606.00 L1174.6 606.00 L1175.6 606.00 L1176.6 606.00 L1177.6 606.00 L1178.6 606.00 L1179.7 606.00 L1180.7 606.00 L1181.7 606.00 L1182.7 606.00 L1183.7 606.00 L1184.7 606.00 L1185.7 606.00 L1186.7 606.00 L1187.8 606.00 L1188.8 606.00 L1189.8 606.00 L1190.8 606.00 L1191.8 606.00 L1192.8 606.00 L1193.8 606.00 L1194.8 606.00 L1195.9 606.00 L1196.9 606.00 L1197.9 606.00 L1198.9 606.00 L1199.9 606.00 L1200.9 606.00 L1201.9 606.00 L1202.9 606.00 L1203.9 606.00 L1205.0 606.00 L1206.0 606.00 L1207.0 606.00 L1208.0 606.00 L1209.0 606.00 L1210.0 606.00 L1211.0 606.00 L1212.0 606.00 L1213.1 606.00 L1214.1 606.00 L1215.1 606.00 L1216.1 606.00 L1217.1 606.00 L1218.1 606.00 L1219.1 606.00 L1220.1 606.00 L1221.2 606.00 L1222.2 606.00 L1223.2 606.00 L1224.2 606.00 L1225.2 606.00 L1226.2 606.00 L1227.2 606.00 L1228.2 606.00 L1229.3 606.00 L1230.3 606.00 L1231.3 606.00 L1232.3 606.00 L1233.3 606.00 L1234.3 606.00 L1235.3 606.00 L1236.3 606.00 L1237.4 606.00 L1238.4 606.00 L1239.4 606.00 L1240.4 606.00 L1241.4 606.00 L1242.4 606.00 L1243.4 606.00 L1244.4 606.00 L1245.4 606.00 L1246.5 606.00 L1247.5 606.00 L1248.5 606.00 L1249.5 606.00 L1250.5 606.00 L1251.5 606.00 L1252.5 606.00 L1253.5 606.00 L1254.6 606.00 L1255.6 606.00 L1256.6 606.00 L1257.6 606.00" stroke="#403f69" stroke-width="1.6" fill="none" stroke-linejoin="round"/><path d="M893.4 550.07 L893.4 551.02 L894.2 552.07 L895.2 553.23 L896.2 554.50 L897.3 555.86 L898.3 557.25 L899.3 558.64 L900.3 559.98 L901.3 561.23 L902.3 562.36 L903.3 563.38 L904.3 564.26 L905.4 565.01 L906.4 565.66 L907.4 566.20 L908.4 566.68 L909.4 567.10 L910.4 567.49 L911.4 567.86 L912.4 568.24 L913.5 568.63 L914.5 569.06 L915.5 569.52 L916.5 570.03 L917.5 570.58 L918.5 571.18 L919.5 571.84 L920.5 572.53 L921.6 573.27 L922.6 574.04 L923.6 574.84 L924.6 575.67 L925.6 576.51 L926.6 577.36 L927.6 578.21 L928.6 579.06 L929.7 579.89 L930.7 580.70 L931.7 581.48 L932.7 582.23 L933.7 582.94 L934.7 583.60 L935.7 584.20 L936.7 584.74 L937.7 585.23 L938.8 585.64 L939.8 585.98 L940.8 586.25 L941.8 586.44 L942.8 586.55 L943.8 586.58 L944.8 586.52 L945.8 586.39 L946.9 586.16 L947.9 585.84 L948.9 585.42 L949.9 584.86 L950.9 584.18 L951.9 583.35 L952.9 582.41 L953.9 581.37 L955.0 580.25 L956.0 579.10 L957.0 577.91 L958.0 576.71 L959.0 575.50 L960.0 574.29 L961.0 573.07 L962.0 571.84 L963.1 570.60 L964.1 569.33 L965.1 568.04 L966.1 566.74 L967.1 565.43 L968.1 564.17 L969.1 562.97 L970.1 561.87 L971.1 560.85 L972.2 559.90 L973.2 558.97 L974.2 558.02 L975.2 557.01 L976.2 555.93 L977.2 554.75 L978.2 553.48 L979.2 552.12 L980.3 550.70 L981.3 549.24 L982.3 547.78 L983.3 546.34 L984.3 544.95 L985.3 543.62 L986.3 542.39 L987.3 541.26 L988.4 540.26 L989.4 539.39 L990.4 538.66 L991.4 538.05 L992.4 537.53 L993.4 537.09 L994.4 536.71 L995.4 536.38 L996.5 536.12 L997.5 535.93 L998.5 535.82 L999.5 535.79 L1000.5 535.86 L1001.5 536.02 L1002.5 536.26 L1003.5 536.60 L1004.6 537.03 L1005.6 537.57 L1006.6 538.22 L1007.6 538.98 L1008.6 539.87 L1009.6 540.87 L1010.6 542.01 L1011.6 543.26 L1012.6 544.64 L1013.7 546.12 L1014.7 547.72 L1015.7 549.42 L1016.7 551.21 L1017.7 553.09 L1018.7 555.03 L1019.7 557.04 L1020.7 559.09 L1021.8 561.19 L1022.8 563.31 L1023.8 565.44 L1024.8 567.58 L1025.8 569.71 L1026.8 571.82 L1027.8 573.90 L1028.8 575.94 L1029.9 577.94 L1030.9 579.88 L1031.9 581.76 L1032.9 583.57 L1033.9 585.31 L1034.9 586.97 L1035.9 588.55 L1036.9 590.05 L1038.0 591.46 L1039.0 592.79 L1040.0 594.04 L1041.0 595.20 L1042.0 596.27 L1043.0 597.27 L1044.0 598.19 L1045.0 599.04 L1046.1 599.81 L1047.1 600.51 L1048.1 601.15 L1049.1 601.73 L1050.1 602.25 L1051.1 602.72 L1052.1 603.14 L1053.1 603.51 L1054.1 603.84 L1055.2 604.13 L1056.2 604.39 L1057.2 604.62 L1058.2 604.82 L1059.2 604.99 L1060.2 605.14 L1061.2 605.27 L1062.2 605.38 L1063.3 605.48 L1064.3 605.56 L1065.3 605.63 L1066.3 605.69 L1067.3 605.75 L1068.3 605.79 L1069.3 605.83 L1070.3 605.86 L1071.4 605.88 L1072.4 605.90 L1073.4 605.92 L1074.4 605.94 L1075.4 605.95 L1076.4 605.96 L1077.4 605.97 L1078.4 605.97 L1079.5 605.98 L1080.5 605.98 L1081.5 605.99 L1082.5 605.99 L1083.5 605.99 L1084.5 605.99 L1085.5 605.99 L1086.5 606.00 L1087.5 606.00 L1088.6 606.00 L1089.6 606.00 L1090.6 606.00 L1091.6 606.00 L1092.6 606.00 L1093.6 606.00 L1094.6 606.00 L1095.6 606.00 L1096.7 606.00 L1097.7 606.00 L1098.7 606.00 L1099.7 606.00 L1100.7 606.00 L1101.7 606.00 L1102.7 606.00 L1103.7 606.00 L1104.8 606.00 L1105.8 606.00 L1106.8 606.00 L1107.8 606.00 L1108.8 606.00 L1109.8 606.00 L1110.8 606.00 L1111.8 606.00 L1112.9 606.00 L1113.9 606.00 L1114.9 606.00 L1115.9 606.00 L1116.9 606.00 L1117.9 606.00 L1118.9 606.00 L1119.9 606.00 L1121.0 606.00 L1122.0 606.00 L1123.0 606.00 L1124.0 606.00 L1125.0 606.00 L1126.0 606.00 L1127.0 606.00 L1128.0 606.00 L1129.0 606.00 L1130.1 606.00 L1131.1 606.00 L1132.1 606.00 L1133.1 606.00 L1134.1 606.00 L1135.1 606.00 L1136.1 606.00 L1137.1 606.00 L1138.2 606.00 L1139.2 606.00 L1140.2 606.00 L1141.2 606.00 L1142.2 606.00 L1143.2 606.00 L1144.2 606.00 L1145.2 606.00 L1146.3 606.00 L1147.3 606.00 L1148.3 606.00 L1149.3 606.00 L1150.3 606.00 L1151.3 606.00 L1152.3 606.00 L1153.3 606.00 L1154.4 606.00 L1155.4 606.00 L1156.4 606.00 L1157.4 606.00 L1158.4 606.00 L1159.4 606.00 L1160.4 606.00 L1161.4 606.00 L1162.5 606.00 L1163.5 606.00 L1164.5 606.00 L1165.5 606.00 L1166.5 606.00 L1167.5 606.00 L1168.5 606.00 L1169.5 606.00 L1170.5 606.00 L1171.6 606.00 L1172.6 606.00 L1173.6 606.00 L1174.6 606.00 L1175.6 606.00 L1176.6 606.00 L1177.6 606.00 L1178.6 606.00 L1179.7 606.00 L1180.7 606.00 L1181.7 606.00 L1182.7 606.00 L1183.7 606.00 L1184.7 606.00 L1185.7 606.00 L1186.7 606.00 L1187.8 606.00 L1188.8 606.00 L1189.8 606.00 L1190.8 606.00 L1191.8 606.00 L1192.8 606.00 L1193.8 606.00 L1194.8 606.00 L1195.9 606.00 L1196.9 606.00 L1197.9 606.00 L1198.9 606.00 L1199.9 606.00 L1200.9 606.00 L1201.9 606.00 L1202.9 606.00 L1203.9 606.00 L1205.0 606.00 L1206.0 606.00 L1207.0 606.00 L1208.0 606.00 L1209.0 606.00 L1210.0 606.00 L1211.0 606.00 L1212.0 606.00 L1213.1 606.00 L1214.1 606.00 L1215.1 606.00 L1216.1 606.00 L1217.1 606.00 L1218.1 606.00 L1219.1 606.00 L1220.1 606.00 L1221.2 606.00 L1222.2 606.00 L1223.2 606.00 L1224.2 606.00 L1225.2 606.00 L1226.2 606.00 L1227.2 606.00 L1228.2 606.00 L1229.3 606.00 L1230.3 606.00 L1231.3 606.00 L1232.3 606.00 L1233.3 606.00 L1234.3 606.00 L1235.3 606.00 L1236.3 606.00 L1237.4 606.00 L1238.4 606.00 L1239.4 606.00 L1240.4 606.00 L1241.4 606.00 L1242.4 606.00 L1243.4 606.00 L1244.4 606.00 L1245.4 606.00 L1246.5 606.00 L1247.5 606.00 L1248.5 606.00 L1249.5 606.00 L1250.5 606.00 L1251.5 606.00 L1252.5 606.00 L1253.5 606.00 L1254.6 606.00 L1255.6 606.00 L1256.6 606.00 L1257.6 606.00" stroke="#de4a6f" stroke-width="1.5" fill="none" stroke-linejoin="round"/></svg>









<svg style="left:0;top:0" width="1290" height="681" font-family="Liberation Sans"><text x="90.0" y="27.4" font-size="12.35" fill="#eceef0" stroke="#eceef0" stroke-width="0.15" text-anchor="start" font-weight="normal">Caffeine Standard Curve + Unkno...</text><text x="310.5" y="26.3" font-size="10.6" fill="#d8dbde" stroke="#d8dbde" stroke-width="0.4" text-anchor="start" font-weight="normal">Batch</text><text x="70.5" y="102.0" font-size="21" fill="#6b6e72" stroke="#6b6e72" stroke-width="0" text-anchor="start" font-weight="normal">Results</text><text x="69.7" y="140.5" font-size="11.2" fill="#333" stroke="#333" stroke-width="0.15" text-anchor="start" font-weight="normal">Linear (2018-10-10 16:14:56 (+11:00))</text><text x="87.0" y="179.3" font-size="11.3" fill="#333a40" stroke="#333a40" stroke-width="0.4" text-anchor="start" font-weight="normal">Standard</text><text x="213.4" y="179.3" font-size="11.3" fill="#333a40" stroke="#333a40" stroke-width="0.4" text-anchor="start" font-weight="normal">273.00 (nm)</text><text x="213.4" y="208.7" font-size="11.3" fill="#56606e" stroke="#56606e" stroke-width="0.15" text-anchor="start" font-weight="normal">Conc</text><text x="213.4" y="228.9" font-size="11.3" fill="#56606e" stroke="#56606e" stroke-width="0.15" text-anchor="start" font-weight="normal">(mg/L)</text><text x="306.0" y="218.8" font-size="11.3" fill="#56606e" stroke="#56606e" stroke-width="0.15" text-anchor="start" font-weight="normal">Abs</text><text x="87.0" y="252.6" font-size="11.3" fill="#7b8794" stroke="#7b8794" stroke-width="0.15" text-anchor="start" font-weight="normal">Standard 1</text><text x="213.4" y="252.6" font-size="11.3" fill="#7b8794" stroke="#7b8794" stroke-width="0.15" text-anchor="start" font-weight="normal">0.000</text><text x="306.0" y="252.6" font-size="11.3" fill="#7b8794" stroke="#7b8794" stroke-width="0.15" text-anchor="start" font-weight="normal">0.001</text><text x="87.0" y="276.6" font-size="11.3" fill="#7b8794" stroke="#7b8794" stroke-width="0.15" text-anchor="start" font-weight="normal">Standard 2</text><text x="213.4" y="276.6" font-size="11.3" fill="#7b8794" stroke="#7b8794" stroke-width="0.15" text-anchor="start" font-weight="normal">20.000</text><text x="306.0" y="276.6" font-size="11.3" fill="#7b8794" stroke="#7b8794" stroke-width="0.15" text-anchor="start" font-weight="normal">1.034</text><text x="87.0" y="300.6" font-size="11.3" fill="#7b8794" stroke="#7b8794" stroke-width="0.15" text-anchor="start" font-weight="normal">Standard 3</text><text x="213.4" y="300.6" font-size="11.3" fill="#7b8794" stroke="#7b8794" stroke-width="0.15" text-anchor="start" font-weight="normal">40.000</text><text x="306.0" y="300.6" font-size="11.3" fill="#7b8794" stroke="#7b8794" stroke-width="0.15" text-anchor="start" font-weight="normal">2.060</text><text x="87.0" y="324.6" font-size="11.3" fill="#7b8794" stroke="#7b8794" stroke-width="0.15" text-anchor="start" font-weight="normal">Standard 4</text><text x="213.4" y="324.6" font-size="11.3" fill="#7b8794" stroke="#7b8794" stroke-width="0.15" text-anchor="start" font-weight="normal">60.000</text><text x="306.0" y="324.6" font-size="11.3" fill="#7b8794" stroke="#7b8794" stroke-width="0.15" text-anchor="start" font-weight="normal">3.069</text><text x="87.0" y="348.6" font-size="11.3" fill="#7b8794" stroke="#7b8794" stroke-width="0.15" text-anchor="start" font-weight="normal">Standard 5</text><text x="213.4" y="348.6" font-size="11.3" fill="#7b8794" stroke="#7b8794" stroke-width="0.15" text-anchor="start" font-weight="normal">80.000</text><text x="306.0" y="348.6" font-size="11.3" fill="#7b8794" stroke="#7b8794" stroke-width="0.15" text-anchor="start" font-weight="normal">4.024</text><text x="87.0" y="372.5" font-size="11.3" fill="#7b8794" stroke="#7b8794" stroke-width="0.15" text-anchor="start" font-weight="normal">273.00nm:</text><text x="158.8" y="372.5" font-size="11.3" fill="#7b8794" stroke="#7b8794" stroke-width="0.15" text-anchor="start" font-weight="normal">y = 0.050 * x + 0.021, r²=1.000</text><text x="87.0" y="396.3" font-size="11.3" fill="#333a40" stroke="#333a40" stroke-width="0.4" text-anchor="start" font-weight="normal">Sample</text><text x="213.4" y="396.3" font-size="11.3" fill="#333a40" stroke="#333a40" stroke-width="0.4" text-anchor="start" font-weight="normal">273.00 (nm)</text><text x="213.4" y="420.3" font-size="11.3" fill="#56606e" stroke="#56606e" stroke-width="0.15" text-anchor="start" font-weight="normal">Conc</text><text x="213.4" y="440.5" font-size="11.3" fill="#56606e" stroke="#56606e" stroke-width="0.15" text-anchor="start" font-weight="normal">(mg/L)</text><text x="306.0" y="430.4" font-size="11.3" fill="#56606e" stroke="#56606e" stroke-width="0.15" text-anchor="start" font-weight="normal">Abs</text><text x="87.0" y="463.7" font-size="11.3" fill="#7b8794" stroke="#7b8794" stroke-width="0.15" text-anchor="start" font-weight="normal">Sample 1</text><text x="213.4" y="463.7" font-size="11.3" fill="#7b8794" stroke="#7b8794" stroke-width="0.15" text-anchor="start" font-weight="normal">59.423</text><text x="306.0" y="463.7" font-size="11.3" fill="#7b8794" stroke="#7b8794" stroke-width="0.15" text-anchor="start" font-weight="normal">3.017</text><text x="87.0" y="487.7" font-size="11.3" fill="#7b8794" stroke="#7b8794" stroke-width="0.15" text-anchor="start" font-weight="normal">Sample 2</text><text x="213.4" y="487.7" font-size="11.3" fill="#7b8794" stroke="#7b8794" stroke-width="0.15" text-anchor="start" font-weight="normal">17.784</text><text x="306.0" y="487.7" font-size="11.3" fill="#7b8794" stroke="#7b8794" stroke-width="0.15" text-anchor="start" font-weight="normal">0.918</text><text x="461.5" y="321.5" font-size="10.2" fill="#505050" stroke="#505050" stroke-width="0.15" text-anchor="middle" font-weight="normal">0.000</text><text x="561.5" y="321.5" font-size="10.2" fill="#505050" stroke="#505050" stroke-width="0.15" text-anchor="middle" font-weight="normal">10.000</text><text x="661.5" y="321.5" font-size="10.2" fill="#505050" stroke="#505050" stroke-width="0.15" text-anchor="middle" font-weight="normal">20.000</text><text x="761.5" y="321.5" font-size="10.2" fill="#505050" stroke="#505050" stroke-width="0.15" text-anchor="middle" font-weight="normal">30.000</text><text x="861.5" y="321.5" font-size="10.2" fill="#505050" stroke="#505050" stroke-width="0.15" text-anchor="middle" font-weight="normal">40.000</text><text x="961.5" y="321.5" font-size="10.2" fill="#505050" stroke="#505050" stroke-width="0.15" text-anchor="middle" font-weight="normal">50.000</text><text x="1061.5" y="321.5" font-size="10.2" fill="#505050" stroke="#505050" stroke-width="0.15" text-anchor="middle" font-weight="normal">60.000</text><text x="1161.5" y="321.5" font-size="10.2" fill="#505050" stroke="#505050" stroke-width="0.15" text-anchor="middle" font-weight="normal">70.000</text><text x="459.1" y="306.9" font-size="10.2" fill="#505050" stroke="#505050" stroke-width="0.15" text-anchor="end" font-weight="normal">0.000</text><text x="459.1" y="257.8" font-size="10.2" fill="#505050" stroke="#505050" stroke-width="0.15" text-anchor="end" font-weight="normal">1.000</text><text x="459.1" y="202.2" font-size="10.2" fill="#505050" stroke="#505050" stroke-width="0.15" text-anchor="end" font-weight="normal">2.000</text><text x="459.1" y="146.7" font-size="10.2" fill="#505050" stroke="#505050" stroke-width="0.15" text-anchor="end" font-weight="normal">3.000</text><text x="459.1" y="91.1" font-size="10.2" fill="#505050" stroke="#505050" stroke-width="0.15" text-anchor="end" font-weight="normal">4.000</text><text x="837.6" y="337.2" font-size="11.75" fill="#6e6e6e" stroke="#6e6e6e" stroke-width="0.15" text-anchor="middle" font-weight="normal">Concentration (mg/L)</text><text transform="translate(426.6 192.4) rotate(-90)" text-anchor="middle" font-size="11.5" fill="#6e6e6e" stroke="#6e6e6e" stroke-width="0.1">Abs</text><text x="523.3" y="643.7" font-size="10.2" fill="#505050" stroke="#505050" stroke-width="0.15" text-anchor="middle" font-weight="normal">250.00</text><text x="624.8" y="643.7" font-size="10.2" fill="#505050" stroke="#505050" stroke-width="0.15" text-anchor="middle" font-weight="normal">300.00</text><text x="726.3" y="643.7" font-size="10.2" fill="#505050" stroke="#505050" stroke-width="0.15" text-anchor="middle" font-weight="normal">350.00</text><text x="459.1" y="612.0" font-size="10.2" fill="#505050" stroke="#505050" stroke-width="0.15" text-anchor="end" font-weight="normal">0.000</text><text x="459.1" y="554.6" font-size="10.2" fill="#505050" stroke="#505050" stroke-width="0.15" text-anchor="end" font-weight="normal">1.000</text><text x="459.1" y="497.3" font-size="10.2" fill="#505050" stroke="#505050" stroke-width="0.15" text-anchor="end" font-weight="normal">2.000</text><text x="459.1" y="440.0" font-size="10.2" fill="#505050" stroke="#505050" stroke-width="0.15" text-anchor="end" font-weight="normal">3.000</text><text x="459.1" y="382.6" font-size="10.2" fill="#505050" stroke="#505050" stroke-width="0.15" text-anchor="end" font-weight="normal">4.000</text><text x="620.8" y="659.8" font-size="11.75" fill="#6e6e6e" stroke="#6e6e6e" stroke-width="0.15" text-anchor="middle" font-weight="normal">Wavelength (nm)</text><text x="632.5" y="366.5" font-size="13.2" fill="#959595" stroke="#959595" stroke-width="0.15" text-anchor="middle" font-weight="normal">Standards</text><text transform="translate(427 500.2) rotate(-90)" text-anchor="middle" font-size="11.5" fill="#6e6e6e" stroke="#6e6e6e" stroke-width="0.1">Abs</text><text x="954.4" y="643.7" font-size="10.2" fill="#505050" stroke="#505050" stroke-width="0.15" text-anchor="middle" font-weight="normal">250.00</text><text x="1056.3" y="643.7" font-size="10.2" fill="#505050" stroke="#505050" stroke-width="0.15" text-anchor="middle" font-weight="normal">300.00</text><text x="1158.2" y="643.7" font-size="10.2" fill="#505050" stroke="#505050" stroke-width="0.15" text-anchor="middle" font-weight="normal">350.00</text><text x="890.9" y="611.3" font-size="10.2" fill="#505050" stroke="#505050" stroke-width="0.15" text-anchor="end" font-weight="normal">0.000</text><text x="890.9" y="534.9" font-size="10.2" fill="#505050" stroke="#505050" stroke-width="0.15" text-anchor="end" font-weight="normal">1.000</text><text x="890.9" y="458.6" font-size="10.2" fill="#505050" stroke="#505050" stroke-width="0.15" text-anchor="end" font-weight="normal">2.000</text><text x="890.9" y="382.3" font-size="10.2" fill="#505050" stroke="#505050" stroke-width="0.15" text-anchor="end" font-weight="normal">3.000</text><text x="1052.3" y="659.8" font-size="11.75" fill="#6e6e6e" stroke="#6e6e6e" stroke-width="0.15" text-anchor="middle" font-weight="normal">Wavelength (nm)</text><text x="1059.0" y="366.5" font-size="13.2" fill="#959595" stroke="#959595" stroke-width="0.15" text-anchor="middle" font-weight="normal">Samples</text><text transform="translate(859 500.2) rotate(-90)" text-anchor="middle" font-size="11.5" fill="#6e6e6e" stroke="#6e6e6e" stroke-width="0.1">Abs</text></svg>
</body></html>
